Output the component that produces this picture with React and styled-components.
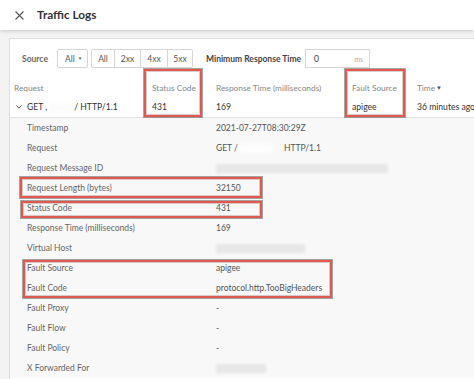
import React from 'react'
import styled, { createGlobalStyle } from 'styled-components'

const GlobalStyle = createGlobalStyle`
  html, body {
    margin: 0;
    padding: 0;
    background: #f3f3f3;
    font-family: Lato, "Open Sans", sans-serif;
    overflow: hidden;
  }
`

const details = [
  { label: 'Timestamp', value: '2021-07-27T08:30:29Z' },
  { label: 'Request', value: 'request' },
  { label: 'Request Message ID', blur: 172 },
  { label: 'Request Length (bytes)', value: '32150', group: 'a' },
  { label: 'Status Code', value: '431', group: 'b' },
  { label: 'Response Time (milliseconds)', value: '169' },
  { label: 'Virtual Host', blur: 89 },
  { label: 'Fault Source', value: 'apigee', group: 'c' },
  { label: 'Fault Code', value: 'protocol.http.TooBigHeaders', group: 'c' },
  { label: 'Fault Proxy', value: '-' },
  { label: 'Fault Flow', value: '-' },
  { label: 'Fault Policy', value: '-' },
  { label: 'X Forwarded For', blur: 50 },
]

// annotation boxes drawn over the detail rows
const groupBox = {
  a: { top: -1, left: 10, width: 238, bottom: 0 },
  b: { top: 3, left: 11, width: 237, bottom: 0 },
  c: { top: 2, left: 13, width: 305, bottom: 0 },
}

const DetailValue = ({ row }) => {
  if (row.blur) return <Blur $w={row.blur} $color="#e6e6e6" />
  if (row.value === 'request')
    return (
      <Value>
        GET /<Blur $w={34} $color="#fdfdfd" style={{ margin: '0 11px 0 1px' }} />HTTP/1.1
      </Value>
    )
  return <Value>{row.value}</Value>
}

const App = () => {
  const groups = []
  details.forEach((row) => {
    const last = groups[groups.length - 1]
    if (row.group && last && last.key === row.group) last.rows.push(row)
    else groups.push({ key: row.group, rows: [row] })
  })

  return (
    <Page>
      <GlobalStyle />
      <Header>
        <Close>
          <svg width="9" height="9" viewBox="0 0 9 9">
            <path d="M0.5 0.5 L8.5 8.5 M8.5 0.5 L0.5 8.5" stroke="#555" strokeWidth="1.1" fill="none" />
          </svg>
        </Close>
        <Title>Traffic Logs</Title>
      </Header>
      <Content>
        <Panel>
          <Toolbar>
            <ToolLabel>Source</ToolLabel>
            <Select>
              All
              <Caret>▼</Caret>
            </Select>
            <ButtonGroup>
              <GroupButton $w={24}>All</GroupButton>
              <GroupButton $w={27}>2xx</GroupButton>
              <GroupButton $w={28}>4xx</GroupButton>
              <GroupButton $w={26}>5xx</GroupButton>
            </ButtonGroup>
            <StrongLabel>Minimum Response Time</StrongLabel>
            <Input>
              <span>0</span>
              <Unit>ms</Unit>
            </Input>
          </Toolbar>
          <Table>
            <Col $w={138}>
              <HeadCell>Request</HeadCell>
              <Cell>
                <Chevron>
                  <svg width="6" height="4" viewBox="0 0 6 4">
                    <path d="M0.5 0.5 L3 3.2 L5.5 0.5" stroke="#555" strokeWidth="1" fill="none" />
                  </svg>
                </Chevron>
                GET ,<Blur $w={22} $color="#fbfbfb" style={{ margin: '0 3px 0 2px' }} />/ HTTP/1.1
              </Cell>
            </Col>
            <Col $w={64}>
              <Highlight $top={-9} $left={-8} $width={54} $bottom={0}>
                <HeadCell>Status Code</HeadCell>
                <Cell>431</Cell>
              </Highlight>
            </Col>
            <Col $w={136}>
              <HeadCell>Response Time (milliseconds)</HeadCell>
              <Cell>169</Cell>
            </Col>
            <Col $w={65}>
              <Highlight $top={-9} $left={-7} $width={56} $bottom={0}>
                <HeadCell>Fault Source</HeadCell>
                <Cell>apigee</Cell>
              </Highlight>
            </Col>
            <Col $w={57}>
              <HeadCell>
                Time<Arrow>▼</Arrow>
              </HeadCell>
              <Cell>36 minutes ago</Cell>
            </Col>
          </Table>
          <Details>
            {groups.map((g, i) => {
              const rows = g.rows.map((row) => (
                <DetailRow key={row.label}>
                  <Label>{row.label}</Label>
                  <DetailValue row={row} />
                </DetailRow>
              ))
              if (!g.key) return <React.Fragment key={i}>{rows}</React.Fragment>
              const b = groupBox[g.key]
              return (
                <Highlight key={i} $top={b.top} $left={b.left} $width={b.width} $bottom={b.bottom}>
                  {rows}
                </Highlight>
              )
            })}
          </Details>
        </Panel>
      </Content>
    </Page>
  )
}

export default App

const Page = styled.div`
  width: 474px;
  height: 379px;
  overflow: hidden;
  background: #f3f3f3;
`

const Header = styled.div`
  height: 30px;
  background: #fff;
  display: flex;
  align-items: center;
  padding-left: 15px;
  box-shadow: 0 1px 4px rgba(0, 0, 0, 0.18);
  position: relative;
  z-index: 1;
`

const Close = styled.div`
  display: flex;
  align-items: center;
  margin-right: 13px;
  margin-top: 1px;
`

const Title = styled.div`
  font-size: 11.8px;
  font-weight: 700;
  color: #333;
  margin-top: -2px;
`

const Content = styled.div`
  padding: 8px 0 0 9px;
`

const Panel = styled.div`
  background: #fff;
  border: 1px solid #dcdcdc;
  border-right: none;
  min-height: 400px;
`

const Toolbar = styled.div`
  display: flex;
  align-items: center;
  height: 19px;
  padding: 10px 0 0 12px;
  font-size: 8.5px;
  color: #555;
`

const ToolLabel = styled.div`
  width: 35px;
  font-weight: 700;
  color: #666;
`

const boxed = `
  height: 19px;
  box-sizing: border-box;
  border: 1px solid #d6d6d6;
  display: flex;
  align-items: center;
  background: #fff;
`

const Select = styled.div`
  ${boxed}
  width: 31px;
  padding-left: 7px;
  border-radius: 2px;
  margin-right: 3px;
`

const Caret = styled.span`
  font-size: 4.5px;
  margin-left: 3px;
`

const ButtonGroup = styled.div`
  display: flex;
  margin-right: 13px;
`

const GroupButton = styled.div`
  ${boxed}
  width: ${(p) => p.$w}px;
  justify-content: center;
  margin-left: -1px;
  &:first-child {
    margin-left: 0;
    border-radius: 2px 0 0 2px;
  }
  &:last-child {
    border-radius: 0 2px 2px 0;
  }
`

const StrongLabel = styled.div`
  font-weight: 700;
  color: #444;
  width: 99px;
`

const Input = styled.div`
  ${boxed}
  width: 65px;
  padding: 0 6px 0 8px;
  justify-content: space-between;
  color: #444;
`

const Unit = styled.span`
  color: #aaa;
  font-size: 7px;
`

const Table = styled.div`
  display: flex;
  margin-top: 10px;
  padding-left: 4px;
  border-bottom: 1px solid #e2e2e2;
`

const Col = styled.div`
  width: ${(p) => p.$w}px;
  flex-shrink: 0;
`

const HeadCell = styled.div`
  height: 19px;
  display: flex;
  align-items: center;
  font-size: 8.3px;
  color: #888;
  white-space: nowrap;
`

const Cell = styled.div`
  height: 20px;
  display: flex;
  align-items: center;
  font-size: 8.6px;
  color: #333;
  white-space: nowrap;
`

const Chevron = styled.span`
  display: inline-flex;
  width: 13px;
  padding-left: 2px;
  box-sizing: border-box;
`

const Arrow = styled.span`
  font-size: 6px;
  margin-left: 1px;
  color: #555;
`

const Highlight = styled.div`
  position: relative;
  &::after {
    content: '';
    position: absolute;
    top: ${(p) => p.$top}px;
    left: ${(p) => p.$left}px;
    bottom: ${(p) => p.$bottom}px;
    width: ${(p) => p.$width}px;
    border: 2px solid #e0584e;
    box-shadow: 0 0 0 1px rgba(60, 60, 60, 0.45), inset 0 0 0 1px rgba(120, 60, 60, 0.25);
    pointer-events: none;
  }
`

const Details = styled.div`
  background: #f8f8f8;
  display: flex;
  flex-direction: column;
`

const DetailRow = styled.div`
  height: 20px;
  display: flex;
  align-items: center;
  padding-left: 17px;
  font-size: 8.5px;
  white-space: nowrap;
`

const Label = styled.div`
  width: 189px;
  color: #666;
`

const Value = styled.div`
  display: flex;
  align-items: center;
  color: #555;
`

const Blur = styled.span`
  display: inline-block;
  width: ${(p) => p.$w}px;
  height: 9px;
  background: ${(p) => p.$color};
  filter: blur(1.5px);
`
